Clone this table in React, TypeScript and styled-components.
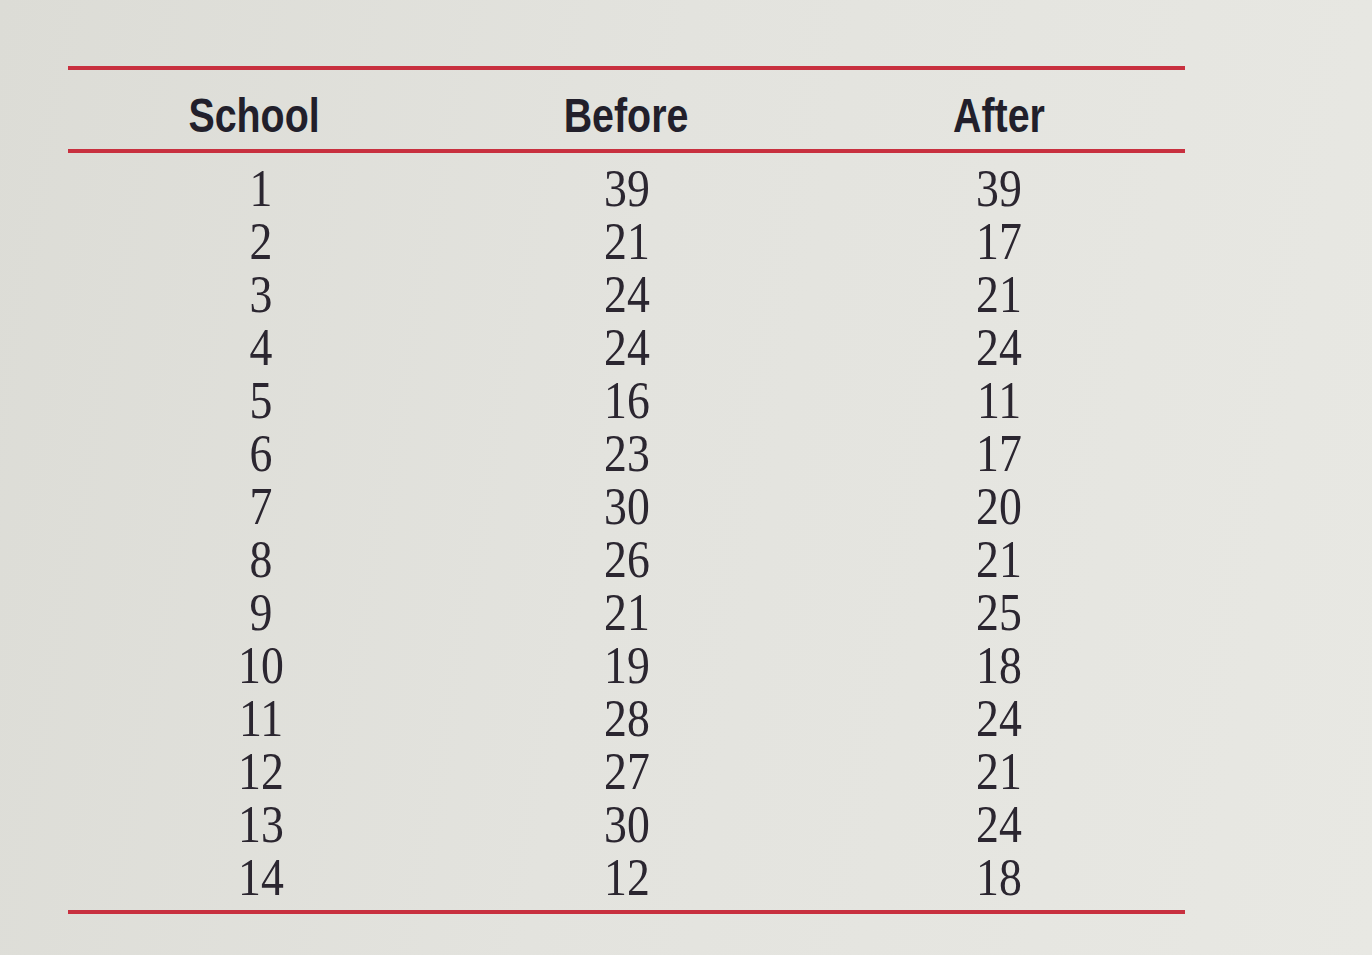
import styled, { createGlobalStyle } from "styled-components";

const GlobalStyle = createGlobalStyle`
  html, body {
    margin: 0;
    padding: 0;
  }
  body {
    background: linear-gradient(100deg, #dcdcd6 0%, #e3e3de 45%, #e8e8e3 100%);
    min-height: 955px;
  }
`;

const Page = styled.div`
  width: 1372px;
  height: 955px;
  padding: 66px 0 0 68px;
  box-sizing: border-box;
`;

const Table = styled.div`
  width: 1117px;
  border-top: 4px solid #c8303f;
  border-bottom: 4px solid #c8303f;
`;

const HeaderRow = styled.div`
  display: grid;
  grid-template-columns: repeat(3, 1fr);
  align-items: center;
  height: 67px;
  padding-top: 12px;
  border-bottom: 4px solid #c8303f;
`;

const Body = styled.div`
  padding: 9px 0 6px;
`;

const Row = styled.div`
  display: grid;
  grid-template-columns: repeat(3, 1fr);
  height: 53px;
  align-items: center;
`;

const HeadCell = styled.div`
  text-align: center;
  font-family: "Liberation Sans", Arial, sans-serif;
  font-weight: 700;
  font-size: 48px;
  color: #221f2b;
  span {
    display: inline-block;
    transform: scaleX(0.82);
  }
`;

const Cell = styled.div<{ $shift?: number }>`
  text-align: center;
  padding-left: ${({ $shift }) => $shift ?? 0}px;
  font-family: "Liberation Serif", "Times New Roman", serif;
  font-size: 52px;
  line-height: 53px;
  color: #2b2630;
  span {
    display: inline-block;
    transform: scaleX(0.88);
  }
`;

const rows: [number, number, number][] = [
  [1, 39, 39],
  [2, 21, 17],
  [3, 24, 21],
  [4, 24, 24],
  [5, 16, 11],
  [6, 23, 17],
  [7, 30, 20],
  [8, 26, 21],
  [9, 21, 25],
  [10, 19, 18],
  [11, 28, 24],
  [12, 27, 21],
  [13, 30, 24],
  [14, 12, 18],
];

export default function App() {
  return (
    <>
      <GlobalStyle />
      <Page>
        <Table>
          <HeaderRow>
            <HeadCell>
              <span>School</span>
            </HeadCell>
            <HeadCell>
              <span>Before</span>
            </HeadCell>
            <HeadCell>
              <span>After</span>
            </HeadCell>
          </HeaderRow>
          <Body>
            {rows.map(([school, before, after]) => (
              <Row key={school}>
                <Cell $shift={14}>
                  <span>{school}</span>
                </Cell>
                <Cell $shift={2}>
                  <span>{before}</span>
                </Cell>
                <Cell>
                  <span>{after}</span>
                </Cell>
              </Row>
            ))}
          </Body>
        </Table>
      </Page>
    </>
  );
}
